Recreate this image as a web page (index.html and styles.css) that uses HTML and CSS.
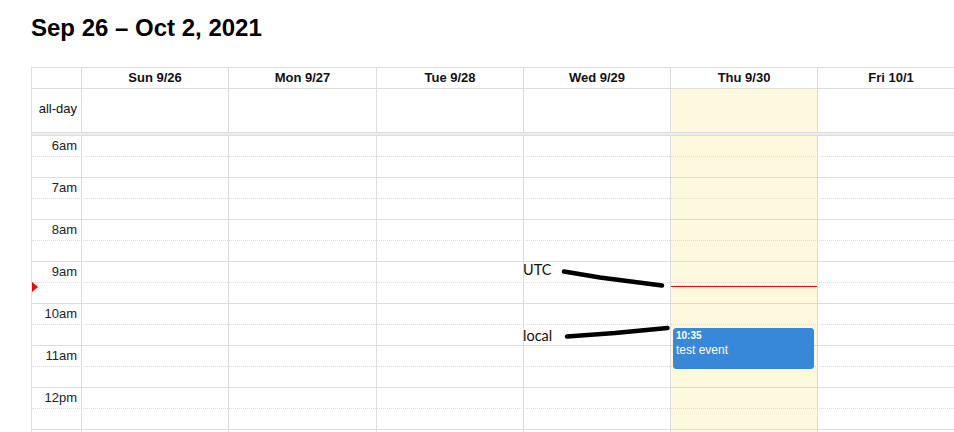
FILE: index.html
```html
<!DOCTYPE html>
<html>
<head>
<meta charset="utf-8">
<title>Calendar</title>
<link rel="stylesheet" href="styles.css">
</head>
<body>
<div class="page">
  <h1 class="title">Sep 26 – Oct 2, 2021</h1>
  <div class="cal">
    <div class="row head">
      <div class="cell axis"></div>
      <div class="cell day">Sun 9/26</div>
      <div class="cell day">Mon 9/27</div>
      <div class="cell day">Tue 9/28</div>
      <div class="cell day">Wed 9/29</div>
      <div class="cell day">Thu 9/30</div>
      <div class="cell day">Fri 10/1</div>
    </div>
    <div class="row allday">
      <div class="cell axis">all-day</div>
      <div class="cell day"></div>
      <div class="cell day"></div>
      <div class="cell day"></div>
      <div class="cell day"></div>
      <div class="cell day today"></div>
      <div class="cell day"></div>
    </div>
    <div class="divider"></div>
    <div class="tg">
      <div class="slots">
        <div class="slot half"><div class="lbl">6am</div></div>
        <div class="slot full"></div>
        <div class="slot half"><div class="lbl">7am</div></div>
        <div class="slot full"></div>
        <div class="slot half"><div class="lbl">8am</div></div>
        <div class="slot full"></div>
        <div class="slot half"><div class="lbl">9am</div></div>
        <div class="slot full"></div>
        <div class="slot half"><div class="lbl">10am</div></div>
        <div class="slot full"></div>
        <div class="slot half"><div class="lbl">11am</div></div>
        <div class="slot full"></div>
        <div class="slot half"><div class="lbl">12pm</div></div>
        <div class="slot full"></div>
        <div class="slot half"></div>
      </div>
      <div class="cols">
        <div class="col axis-col"><div class="now-arrow"></div></div>
        <div class="col"></div>
        <div class="col"></div>
        <div class="col"></div>
        <div class="col"></div>
        <div class="col today">
          <div class="now-line"></div>
          <div class="event">
            <div class="ev-time">10:35</div>
            <div class="ev-title">test event</div>
          </div>
        </div>
        <div class="col"></div>
      </div>
    </div>
  </div>
  <svg class="annot" width="954" height="432" viewBox="0 0 954 432">
    <text class="note" x="523" y="275">UTC</text>
    <text class="note" x="523" y="341">local</text>
    <path d="M564 271.5 L600 277.5 L662 285.5" class="stroke"/>
    <path d="M567 336.5 L615 333 L667.5 328" class="stroke"/>
  </svg>
</div>
</body>
</html>
```
FILE: styles.css
```css
html, body {
  margin: 0;
  padding: 0;
  width: 954px;
  height: 432px;
  overflow: hidden;
  background: #fff;
}

body {
  font-family: "Liberation Sans", Arial, sans-serif;
  font-size: 13px;
  color: #111;
}

.page {
  position: relative;
  width: 954px;
  height: 432px;
  padding: 14px 0 0 31px;
  box-sizing: border-box;
  overflow: hidden;
}

.title {
  margin: 0 0 25px 0;
  font-size: 24px;
  line-height: 28px;
  font-weight: bold;
  color: #000;
  white-space: nowrap;
}

.cal {
  width: 923px;
  height: 365px;
  overflow: hidden;
  border-top: 1px solid #ddd;
  border-left: 1px solid #ddd;
  box-sizing: border-box;
}

.row,
.slot,
.cols {
  display: grid;
  grid-template-columns: 49px 147px 148px 147px 147px 147px 147px;
}

.cell {
  box-sizing: border-box;
}

.cell.day {
  border-left: 1px solid #ddd;
}

.head {
  height: 21px;
  border-bottom: 1px solid #ddd;
  box-sizing: border-box;
}

.head .day {
  font-weight: bold;
  text-align: center;
  line-height: 20px;
}

.allday {
  height: 44px;
  border-bottom: 1px solid #ddd;
  box-sizing: border-box;
}

.allday .axis {
  text-align: right;
  padding: 10px 4px 0 0;
  line-height: 20px;
}

.today {
  background: rgba(252, 218, 60, 0.17);
}

.divider {
  height: 3px;
  background: #ececec;
  border-bottom: 1px solid #ddd;
  box-sizing: border-box;
}

.tg {
  position: relative;
}

.slot {
  height: 21px;
  box-sizing: border-box;
}

.slot.half {
  border-bottom: 1px dotted #ddd;
}

.slot.full {
  border-bottom: 1px solid #ddd;
}

.lbl {
  text-align: right;
  padding-right: 4px;
  line-height: 20px;
  color: #222;
}

.cols {
  position: absolute;
  top: 0;
  left: 0;
  bottom: 0;
  right: 0;
}

.col {
  position: relative;
  box-sizing: border-box;
  border-left: 1px solid #ddd;
}

.col.axis-col {
  border-left: none;
}

.now-arrow {
  position: absolute;
  left: 0;
  top: 146px;
  width: 0;
  height: 0;
  border-style: solid;
  border-width: 5px 0 5px 6px;
  border-color: transparent transparent transparent red;
}

.now-line {
  position: absolute;
  left: 0;
  right: 0;
  top: 150px;
  border-top: 1px solid red;
}

.event {
  position: absolute;
  top: 192px;
  left: 2px;
  right: 3px;
  height: 41px;
  box-sizing: border-box;
  background: #3788d8;
  border: 1px solid #3788d8;
  border-radius: 3px;
  padding: 1px 2px 0 2px;
  color: #fff;
  overflow: hidden;
}

.ev-time {
  font-size: 10px;
  font-weight: bold;
  line-height: 11.5px;
  margin-bottom: 1px;
}

.ev-title {
  font-size: 12px;
  line-height: 14px;
}

.annot {
  position: absolute;
  top: 0;
  left: 0;
  pointer-events: none;
}

.note {
  font-family: Lato, "Open Sans", sans-serif;
  font-size: 14.5px;
  fill: #111;
}

.stroke {
  fill: none;
  stroke: #000;
  stroke-width: 4.5;
  stroke-linecap: round;
  stroke-linejoin: round;
}
```
